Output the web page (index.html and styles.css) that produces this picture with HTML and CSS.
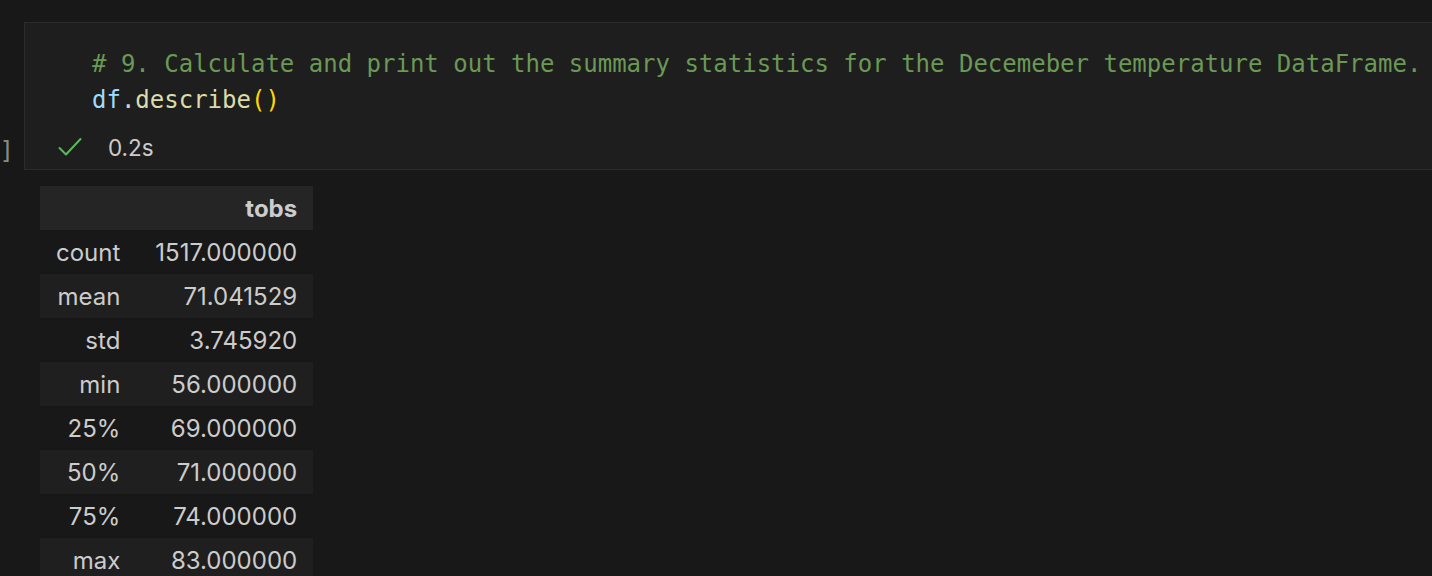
FILE: index.html
```html
<!DOCTYPE html>
<html>
<head>
<meta charset="utf-8">
<link rel="stylesheet" href="styles.css">
</head>
<body>
<div class="cell">
  <span class="exec-count">9]</span>
  <div class="code">
    <div class="line"><span class="cm"># 9. Calculate and print out the summary statistics for the Decemeber temperature DataFrame.</span></div>
    <div class="line"><span class="var">df</span><span class="pn">.</span><span class="fn">describe</span><span class="br">()</span></div>
  </div>
  <div class="status">
    <svg class="check" width="24" height="20" viewBox="0 0 24 20"><path d="M1.5 11 L8 17.5 L22.5 2" fill="none" stroke="#5bb85d" stroke-width="2" stroke-linecap="round" stroke-linejoin="round"/></svg>
    <span class="time">0.2s</span>
  </div>
</div>
<table class="df">
  <thead>
    <tr><th></th><th>tobs</th></tr>
  </thead>
  <tbody>
    <tr><th>count</th><td>1517.000000</td></tr>
    <tr><th>mean</th><td>71.041529</td></tr>
    <tr><th>std</th><td>3.745920</td></tr>
    <tr><th>min</th><td>56.000000</td></tr>
    <tr><th>25%</th><td>69.000000</td></tr>
    <tr><th>50%</th><td>71.000000</td></tr>
    <tr><th>75%</th><td>74.000000</td></tr>
    <tr><th>max</th><td>83.000000</td></tr>
  </tbody>
</table>
</body>
</html>
```
FILE: styles.css
```css
html, body {
  margin: 0;
  padding: 0;
  background: #181818;
  overflow: hidden;
}
body {
  height: 576px;
}
.cell {
  position: relative;
  margin-top: 22px;
  margin-left: 24px;
  margin-right: -20px;
  height: 146px;
  border: 1px solid #2b2b2d;
  background: #1e1e1e;
  box-sizing: content-box;
}
.exec-count {
  position: absolute;
  left: -40px;
  top: 113px;
  font-family: "DejaVu Sans Mono", monospace;
  font-size: 24px;
  line-height: 30px;
  color: #8a8a8a;
}
.code {
  padding: 23px 0 0 67px;
  font-family: "DejaVu Sans Mono", monospace;
  font-size: 24px;
  line-height: 36px;
}
.line {
  white-space: pre;
  height: 36px;
}
.cm { color: #6a9955; }
.var { color: #9cdcfe; }
.pn { color: #d4d4d4; }
.fn { color: #dcdcaa; }
.br { color: #ffd700; }
.status {
  display: flex;
  align-items: center;
  height: 36px;
  margin-top: 11px;
  padding-left: 33px;
}
.check {
  display: block;
}
.time {
  margin-left: 26px;
  font-family: Inter, "Noto Sans", sans-serif;
  font-size: 22.5px;
  color: #cccccc;
}
.df {
  margin: 16px 0 0 40px;
  border-collapse: collapse;
  font-family: Inter, "Noto Sans", sans-serif;
  font-size: 24px;
  color: #cccccc;
}
.df th, .df td {
  height: 44px;
  padding: 0 16px;
  text-align: right;
  font-weight: normal;
  white-space: nowrap;
}
.df td,
.df thead th + th {
  padding-left: 19px;
}
.df thead tr {
  background: #252525;
}
.df thead th {
  font-weight: bold;
}
.df tbody tr:nth-child(even) {
  background: #1f1f1f;
}
```
